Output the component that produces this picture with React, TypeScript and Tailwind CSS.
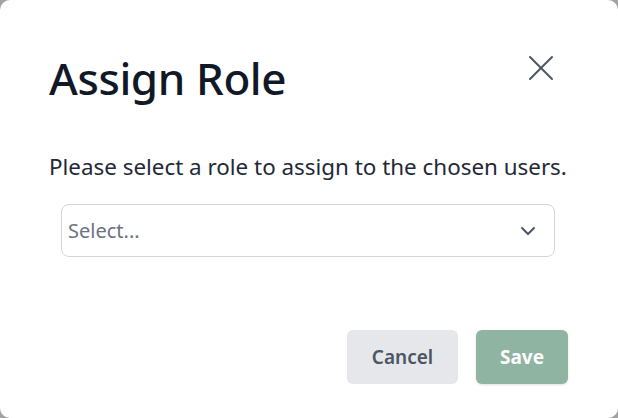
import { ChevronDown } from 'lucide-react';

export default function App() {
  return (
    <div className="w-[618px] h-[418px] bg-[#a3a3a3]" style={{ fontFamily: '"Noto Sans", "Open Sans", sans-serif' }}>
      <div className="w-full h-full bg-white rounded-[10px] flex flex-col pl-[49px] pr-[50px] pt-[48px]">
        {/* header */}
        <div className="flex items-start justify-between">
          <h2 className="text-[44px] leading-[60px] font-medium text-[#111827] tracking-[-0.4px]">Assign Role</h2>
          <button className="mt-[7px] mr-[14px] text-[#4b5563]">
            <svg width="26" height="26" viewBox="0 0 26 26" fill="none" stroke="currentColor" strokeWidth="2" strokeLinecap="round">
              <line x1="2" y1="2" x2="24" y2="24" />
              <line x1="24" y1="2" x2="2" y2="24" />
            </svg>
          </button>
        </div>

        <p className="mt-[44px] text-[22.4px] leading-[30px] text-[#1f2937] whitespace-nowrap">
          Please select a role to assign to the chosen users.
        </p>

        <div className="mt-[22px] ml-[12px] mr-[13px] h-[53px] border border-[#d1d5db] rounded-[8px] flex items-center justify-between pl-[6px] pr-[14px]">
          <span className="text-[20px] text-[#6b7280]">Select...</span>
          <ChevronDown className="w-6 h-6 text-[#4b5563]" strokeWidth={2} />
        </div>

        <div className="mt-[73px] flex justify-end gap-[18px]">
          <button className="w-[111px] h-[54px] rounded-[6px] bg-[#e5e7eb] text-[#4b5563] text-[19px] font-semibold">
            Cancel
          </button>
          <button className="w-[92px] h-[54px] rounded-[6px] bg-[#8fb4a1] text-white text-[19px] font-bold shadow-sm">
            Save
          </button>
        </div>
      </div>
    </div>
  );
}
